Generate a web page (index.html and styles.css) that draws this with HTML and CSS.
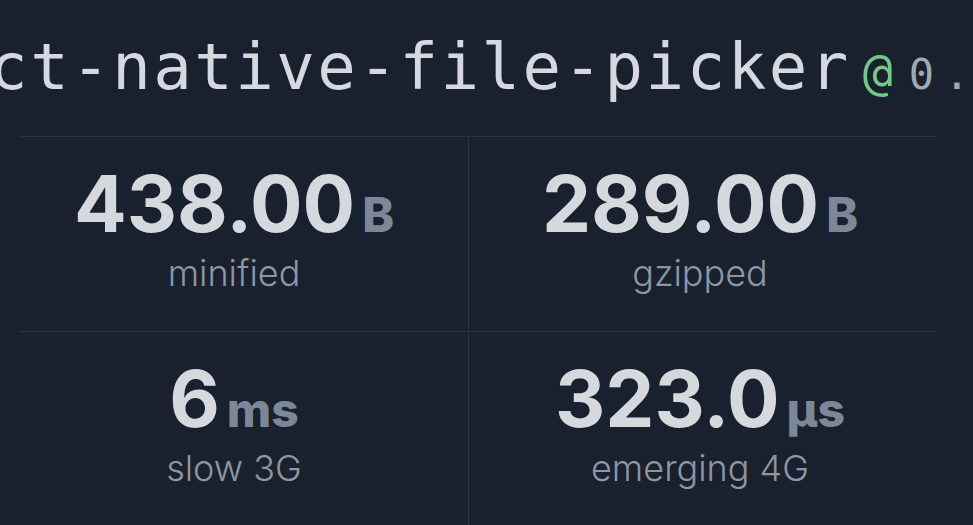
FILE: index.html
```html
<!DOCTYPE html>
<html lang="en">
<head>
<meta charset="utf-8">
<title>react-native-file-picker</title>
<link rel="stylesheet" href="styles.css">
</head>
<body>
  <main class="page">
    <h1 class="title"><span class="name">react-native-file-picker</span><span class="at">@</span><span class="version">0.0.7</span></h1>
    <section class="stats">
      <div class="divider"></div>
      <div class="stat">
        <div class="value"><span class="num">438.00</span><span class="unit">B</span></div>
        <div class="label">minified</div>
      </div>
      <div class="stat stat-right">
        <div class="value"><span class="num">289.00</span><span class="unit">B</span></div>
        <div class="label">gzipped</div>
      </div>
      <div class="divider"></div>
      <div class="stat">
        <div class="value"><span class="num">6</span><span class="unit">ms</span></div>
        <div class="label">slow 3G</div>
      </div>
      <div class="stat stat-right">
        <div class="value"><span class="num">323.0</span><span class="unit">µs</span></div>
        <div class="label">emerging 4G</div>
      </div>
    </section>
  </main>
</body>
</html>
```
FILE: styles.css
```css
html, body {
  margin: 0;
  padding: 0;
  background: #18212d;
  overflow: hidden;
}

.page {
  width: 973px;
  height: 525px;
  overflow: hidden;
}

.title {
  margin: 30px 0 24px -134px;
  white-space: nowrap;
  font-family: "DejaVu Sans Mono", "Liberation Mono", monospace;
  font-weight: normal;
  font-size: 64px;
  line-height: 74px;
  letter-spacing: 2.5px;
  color: #d5d9df;
}

.at {
  font-size: 50px;
  color: #74c98a;
  margin-left: 12px;
  letter-spacing: 0;
}

.version {
  font-size: 42px;
  color: #a3a9b1;
  margin-left: 16px;
  letter-spacing: 10px;
}

.stats {
  display: grid;
  grid-template-columns: 468px 463px;
}

.divider {
  grid-column: 1 / -1;
  height: 1px;
  background: #2a3440;
  margin: 0 -5px 0 19px;
}

.stat {
  display: flex;
  flex-direction: column;
  align-items: center;
  height: 194px;
  padding-top: 28px;
  box-sizing: border-box;
}

.stat-right {
  border-left: 1px solid #2a3440;
}

.value {
  display: flex;
  align-items: baseline;
  font-family: Inter, "Noto Sans", sans-serif;
  font-weight: 700;
  line-height: 78px;
}

.num {
  font-size: 78px;
  color: #d5d8dd;
}

.unit {
  font-size: 48px;
  font-weight: 800;
  color: #7c8797;
  margin-left: 7px;
}

.label {
  margin-top: -2px;
  font-family: Inter, "Noto Sans", sans-serif;
  font-weight: 300;
  font-size: 36px;
  line-height: 42px;
  color: #8d97a4;
}
```
